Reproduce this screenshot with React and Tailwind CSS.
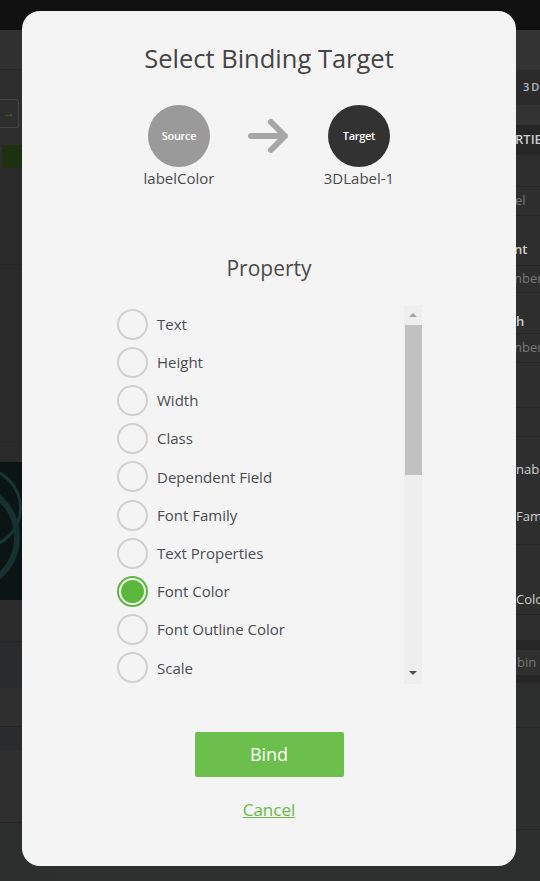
import React from "react";

const FONT = { fontFamily: '"Open Sans", "Noto Sans", sans-serif' };

const props = [
  "Text",
  "Height",
  "Width",
  "Class",
  "Dependent Field",
  "Font Family",
  "Text Properties",
  "Font Color",
  "Font Outline Color",
  "Scale",
];

function Radio({ checked }) {
  return (
    <div
      className={
        "w-[31px] h-[31px] rounded-full border-2 flex items-center justify-center shrink-0 " +
        (checked ? "border-[#5cb83c]" : "border-[#d0d0d0]")
      }
    >
      {checked && <div className="w-[23px] h-[23px] rounded-full bg-[#5cb83c]" />}
    </div>
  );
}

function Backdrop() {
  return (
    <div className="absolute inset-0 flex flex-col bg-[#2e2f2f]">
      <div className="h-[30px] bg-[#111111] shrink-0" />
      <div className="flex-1 flex">
        {/* left pane */}
        <div className="w-[60px] flex flex-col">
          <div className="h-[40px] bg-[#303030] border-b border-[#262626]" />
          <div className="h-[28px] bg-[#2e2e2e]" />
          <div className="h-[30px] bg-[#2e2e2e] flex items-center">
            <div className="w-[19px] h-[29px] border border-[#444] rounded-r-[3px] border-l-0 flex items-center justify-center text-[#3d7a25] text-[12px]">→</div>
          </div>
          <div className="h-[16px] bg-[#2e2e2e]" />
          <div className="h-[24px] bg-[#2e2e2e] flex items-center pl-[2px]">
            <div className="w-[22px] h-[23px] rounded-[3px] bg-[#1d3010]" />
          </div>
          <div className="h-[97px] bg-[#2a2a2a] border-b border-[#262626]" />
          <div className="h-[178px] bg-[#2a2a2a] border-b border-[#262626]" />
          <div className="h-[19px] bg-[#2a2a2a]" />
          <div className="h-[138px] bg-[#0b1515] relative overflow-hidden">
            <div className="absolute left-[-60px] top-[5px] w-[82px] h-[82px] rounded-full border-[3px] border-[#1a3535]" />
            <div className="absolute left-[-90px] top-[20px] w-[110px] h-[110px] rounded-full border-[6px] border-[#173030]" />
          </div>
          <div className="h-[42px] bg-[#2c2c2c] border-b border-[#262626]" />
          <div className="h-[46px] bg-[#2a2b2d]" />
          <div className="h-[39px] bg-[#2e2f2e] border-b border-[#262626]" />
          <div className="h-[23px] bg-[#2a2b2d]" />
          <div className="h-[73px] bg-[#2e2f2e] border-b border-[#262626]" />
          <div className="flex-1 bg-[#2d2e2e]" />
        </div>
        <div className="flex-1" />
        {/* right pane */}
        <div className="w-[60px] flex flex-col text-[13px] overflow-hidden whitespace-nowrap">
          <div className="h-[40px] bg-[#333]" />
          <div className="h-[35px] bg-[#2b2b2b] flex items-center text-[#bbb] tracking-[2px] font-semibold text-[11px] pl-[43px]">3D</div>
          <div className="h-[20px] bg-[#333]" />
          <div className="h-[30px] bg-[#262626] flex items-center text-[#ccc] font-semibold pl-[35px]">RTIE</div>
          <div className="h-[32px] bg-[#2e2e2e] border-b border-[#262626]" />
          <div className="h-[29px] bg-[#2e2e2e] border-b border-[#262626] flex items-center text-[#777] pl-[35px]">el</div>
          <div className="h-[49px] bg-[#2e2e2e] flex items-center text-[#d0d0d0] font-semibold pl-[34px] pt-[18px]">nt</div>
          <div className="h-[28px] bg-[#2e2e2e] border-y border-[#262626] flex items-center text-[#777] pl-[34px]">nber</div>
          <div className="h-[40px] bg-[#2e2e2e] flex items-center text-[#d0d0d0] font-semibold pl-[36px] pt-[18px]">h</div>
          <div className="h-[30px] bg-[#2e2e2e] border-y border-[#262626] flex items-center text-[#777] pl-[34px]">nber</div>
          <div className="h-[45px] bg-[#2e2e2e] border-b border-[#262626]" />
          <div className="h-[29px] bg-[#2e2e2e] border-b border-[#262626]" />
          <div className="h-[53px] bg-[#2e2e2e] flex items-center text-[#d0d0d0] pl-[36px] pt-[12px]">nabl</div>
          <div className="h-[55px] bg-[#2e2e2e] border-b border-[#262626] flex items-center text-[#d0d0d0] pl-[36px]">Fam</div>
          <div className="h-[70px] bg-[#2e2e2e] border-b border-[#262626] flex items-center text-[#d0d0d0] pl-[36px] pt-[40px]">Colo</div>
          <div className="h-[25px] bg-[#2e2e2e]" />
          <div className="h-[10px] bg-[#262626]" />
          <div className="h-[25px] bg-[#2e2f2e] flex items-center text-[#777] pl-[37px]">bin</div>
          <div className="h-[8px] bg-[#262626]" />
          <div className="h-[45px] bg-[#2d2e2e] border-b border-[#262626]" />
          <div className="h-[102px] bg-[#2d2e2e] border-b border-[#262626]" />
          <div className="flex-1 bg-[#2d2e2e]" />
        </div>
      </div>
    </div>
  );
}

export default function App() {
  return (
    <div className="relative w-[540px] h-[881px] overflow-hidden" style={FONT}>
      <Backdrop />
      <div className="absolute left-[22px] top-[11px] w-[494px] h-[855px] rounded-[18px] bg-[#f4f4f4] flex flex-col items-center text-[#444]">
        <h1 className="mt-[29px] text-[25.5px] leading-[36px] text-[#454545]">Select Binding Target</h1>

        <div className="mt-[29px] flex items-start">
          <div className="flex flex-col items-center w-[90px]">
            <div className="w-[62px] h-[62px] rounded-full bg-[#9a9a9a] flex items-center justify-center text-white text-[11px] font-semibold tracking-[-0.3px]">Source</div>
            <div className="mt-[1px] text-[15px] leading-[20px] text-[#4a4a4a]">labelColor</div>
          </div>
          <div className="w-[90px] h-[62px] flex items-center justify-center">
            <svg width="44" height="36" viewBox="0 0 44 36" fill="none" stroke="#a6a6a6" strokeWidth="6" strokeLinecap="round" strokeLinejoin="round">
              <path d="M4 18 H38 M24 4 L38 18 L24 32" />
            </svg>
          </div>
          <div className="flex flex-col items-center w-[90px]">
            <div className="w-[62px] h-[62px] rounded-full bg-[#323232] flex items-center justify-center text-white text-[11px] font-semibold tracking-[-0.3px]">Target</div>
            <div className="mt-[1px] text-[15px] leading-[20px] text-[#4a4a4a]">3DLabel-1</div>
          </div>
        </div>

        <h2 className="mt-[65px] text-[21px] leading-[30px] text-[#4a4a4a]">Property</h2>

        <div className="mt-[22px] w-[306px] h-[379px] flex">
          <div className="flex-1 overflow-hidden pl-[1px]">
            {props.map((p) => (
              <div key={p} className="h-[38.2px] flex items-center gap-[9px]">
                <Radio checked={p === "Font Color"} />
                <span className="text-[15px] text-[#4a4d52]">{p}</span>
              </div>
            ))}
          </div>
          <div className="w-[18px] bg-[#eeeeee] flex flex-col items-center">
            <div className="h-[20px] flex items-center justify-center">
              <div className="w-0 h-0 border-l-[4px] border-r-[4px] border-b-[4px] border-l-transparent border-r-transparent border-b-[#a3a3a3]" />
            </div>
            <div className="w-[17px] h-[150px] bg-[#c1c1c1]" />
            <div className="flex-1" />
            <div className="h-[22px] flex items-center justify-center">
              <div className="w-0 h-0 border-l-[4px] border-r-[4px] border-t-[4px] border-l-transparent border-r-transparent border-t-[#505050]" />
            </div>
          </div>
        </div>

        <button className="mt-[48px] w-[149px] h-[45px] rounded-[2px] bg-[#6cbf4d] text-white text-[18px]">Bind</button>
        <a className="mt-[20px] text-[17px] text-[#66bb4a] underline">Cancel</a>
      </div>
    </div>
  );
}
